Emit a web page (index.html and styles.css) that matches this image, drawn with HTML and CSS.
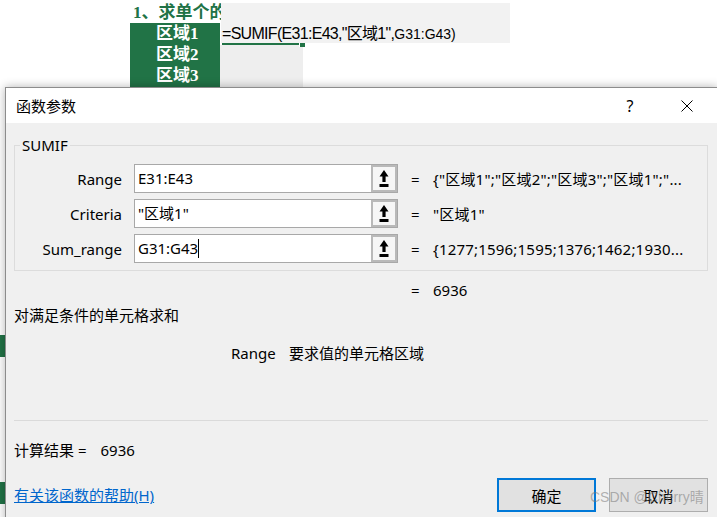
FILE: index.html
```html
<!DOCTYPE html>
<html lang="zh-CN">
<head>
<meta charset="utf-8">
<title>函数参数</title>
<link rel="stylesheet" href="styles.css">
</head>
<body>
<div class="screen">
  <div class="sheet">
    <div class="edge">
      <div class="edge-gap-a"></div>
      <div class="edge-cell"></div>
      <div class="edge-gap-b"></div>
      <div class="edge-cell"></div>
    </div>
    <div class="col-green">
      <div class="title-row">1、求单个的银行</div>
      <div class="cell">区域<span class="num">1</span></div>
      <div class="cell">区域<span class="num">2</span></div>
      <div class="cell">区域<span class="num">3</span></div>
      <div class="cell"></div>
    </div>
    <div class="col-sel">
      <div class="sel-top"></div>
      <div class="sel-line"></div>
      <div class="sel-body"></div>
    </div>
  </div>

  <div class="formula">=SUMIF(E31:E43,"区域1",<span class="small">G31:G43)</span></div>

  <div class="dialog">
    <div class="titlebar">
      <div class="title">函数参数</div>
      <div class="tb-btn">?</div>
      <div class="tb-btn tb-close">
        <svg width="12" height="12" viewBox="0 0 12 12"><path d="M0.5 0.5 L11.5 11.5 M11.5 0.5 L0.5 11.5" stroke="#000" stroke-width="1" fill="none"/></svg>
      </div>
    </div>
    <div class="body">
      <fieldset class="group">
        <legend>SUMIF</legend>
        <div class="params">
          <div class="label">Range</div>
          <div class="field"><div class="field-text">E31:E43</div><div class="pick"><svg width="10" height="17" viewBox="0 0 10 17"><path d="M5 0 L9.5 6.5 L6.6 6.5 L6.6 12 L3.4 12 L3.4 6.5 L0.5 6.5 Z" fill="#000"/><rect x="0.5" y="14" width="9" height="3" fill="#000"/></svg></div></div>
          <div class="eq">=</div>
          <div class="val">{"区域1";"区域2";"区域3";"区域1";"...</div>

          <div class="label">Criteria</div>
          <div class="field"><div class="field-text">"区域1"</div><div class="pick"><svg width="10" height="17" viewBox="0 0 10 17"><path d="M5 0 L9.5 6.5 L6.6 6.5 L6.6 12 L3.4 12 L3.4 6.5 L0.5 6.5 Z" fill="#000"/><rect x="0.5" y="14" width="9" height="3" fill="#000"/></svg></div></div>
          <div class="eq">=</div>
          <div class="val">"区域1"</div>

          <div class="label">Sum_range</div>
          <div class="field"><div class="field-text">G31:G43<span class="caret"></span></div><div class="pick"><svg width="10" height="17" viewBox="0 0 10 17"><path d="M5 0 L9.5 6.5 L6.6 6.5 L6.6 12 L3.4 12 L3.4 6.5 L0.5 6.5 Z" fill="#000"/><rect x="0.5" y="14" width="9" height="3" fill="#000"/></svg></div></div>
          <div class="eq">=</div>
          <div class="val">{1277;1596;1595;1376;1462;1930...</div>
        </div>
      </fieldset>

      <div class="total"><span class="total-eq">=</span><span>6936</span></div>
      <div class="desc">对满足条件的单元格求和</div>
      <div class="arg-desc"><span class="arg-name">Range</span><span>要求值的单元格区域</span></div>
      <div class="sep"></div>
      <div class="result"><span>计算结果 =</span><span class="result-val">6936</span></div>
      <div class="footer">
        <a class="help" href="#">有关该函数的帮助(H)</a>
        <div class="btn btn-ok">确定</div>
        <div class="btn">取消</div>
      </div>
    </div>
  </div>

  <div class="watermark">CSDN @Cherry晴</div>
</div>
</body>
</html>
```

FILE: styles.css
```css
html, body {
  margin: 0;
  padding: 0;
  background: #ffffff;
}
.screen {
  position: relative;
  width: 717px;
  height: 517px;
  overflow: hidden;
  font-family: "Noto Sans", "Noto Sans CJK SC", sans-serif;
}

/* spreadsheet behind */
.sheet {
  display: flex;
  align-items: flex-start;
}
.edge {
  width: 5px;
  margin-right: 125px;
}
.edge-gap-a { height: 335px; }
.edge-gap-b { height: 125px; }
.edge-cell { height: 22px; background: #217346; }

.col-green {
  width: 90px;
  white-space: nowrap;
  font-family: "Liberation Serif", "Noto Sans CJK SC", serif;
  font-weight: bold;
  font-size: 17px;
}
.title-row {
  height: 20px;
  padding-top: 3px;
  line-height: 20px;
  color: #217346;
  padding-left: 3px;
}
.cell {
  height: 21px;
  line-height: 21px;
  background: #217346;
  color: #ffffff;
  padding-left: 26px;
}
.cell:last-child { height: 40px; }
.num { font-family: "Liberation Serif", serif; }

.col-sel { width: 83px; }
.sel-top { height: 43px; }
.sel-line {
  position: relative;
  height: 2px;
  margin: 0 3px 0 2px;
  background: #217346;
}
.sel-line::after {
  content: "";
  position: absolute;
  right: -5px;
  top: -1px;
  width: 5px;
  height: 5px;
  background: #217346;
  border-left: 1px solid #fff;
}
.sel-body {
  height: 50px;
  background: #eeeeee;
}

.formula {
  position: absolute;
  left: 221px;
  top: 3px;
  width: 289px;
  height: 40px;
  box-sizing: border-box;
  padding: 21px 0 0 1px;
  line-height: 20px;
  background: #f2f2f2;
  font-family: "Liberation Sans", "Noto Sans CJK SC", sans-serif;
  font-size: 16px;
  letter-spacing: -0.7px;
  color: #000;
  white-space: nowrap;
}
.formula .small { font-size: 14px; letter-spacing: 0; }

/* dialog window */
.dialog {
  position: absolute;
  left: 5px;
  top: 87px;
  width: 713px;
  height: 440px;
  box-sizing: border-box;
  border: 1px solid #8c8c8c;
  background: #f0f0f0;
  box-shadow: 0 0 9px rgba(0, 0, 0, 0.3);
  font-size: 15px;
  color: #000;
}
.titlebar {
  display: flex;
  align-items: center;
  height: 35px;
  background: #ffffff;
  padding-right: 7px;
}
.title {
  flex: 1;
  padding-left: 10px;
  line-height: 20px;
}
.tb-btn {
  width: 46px;
  height: 35px;
  display: flex;
  align-items: center;
  justify-content: center;
  font-size: 16px;
}
.tb-close { margin-left: 11px; }

.body {
  padding: 12px 9px 0 8px;
}
.group {
  margin: 0;
  padding: 0 0 7px 0;
  border: 1px solid #dcdcdc;
  min-width: 0;
}
.group legend {
  padding: 0 2px;
  margin-left: 5px;
  line-height: 20px;
  font-size: 15px;
}
.params {
  display: grid;
  grid-template-columns: 119px 264px 35px 1fr;
  grid-auto-rows: 29px;
  row-gap: 6px;
  align-items: center;
  padding-top: 9px;
}
.label {
  text-align: right;
  padding-right: 12px;
  line-height: 20px;
}
.field {
  display: flex;
  height: 29px;
  box-sizing: border-box;
  border: 1px solid #a8a8a8;
  background: #ffffff;
}
.field-text {
  flex: 1;
  padding-left: 3px;
  line-height: 27px;
  white-space: nowrap;
}
.caret {
  display: inline-block;
  width: 1px;
  height: 19px;
  background: #000;
  vertical-align: middle;
  margin-top: -3px;
}
.pick {
  width: 26px;
  height: 27px;
  box-sizing: border-box;
  border: 2px solid #b9b9b9;
  background: #f6f6f6;
  display: flex;
  align-items: center;
  justify-content: center;
}
.eq {
  padding-left: 13px;
  line-height: 20px;
}
.val {
  line-height: 20px;
  white-space: nowrap;
  letter-spacing: 0.2px;
}

.total {
  margin-top: 9px;
  padding-left: 397px;
  line-height: 20px;
}
.total-eq {
  display: inline-block;
  width: 22px;
}
.desc {
  margin-top: 5px;
  line-height: 20px;
}
.arg-desc {
  margin-top: 18px;
  padding-left: 217px;
  line-height: 20px;
}
.arg-name {
  display: inline-block;
  width: 58px;
}
.sep {
  margin-top: 57px;
  height: 1px;
  background: #dadada;
}
.result {
  margin-top: 19px;
  line-height: 20px;
}
.result-val { margin-left: 14px; }

.footer {
  display: flex;
  align-items: center;
  margin-top: 18px;
  gap: 13px;
}
.help {
  flex: 1;
  color: #0066cc;
  text-decoration: underline;
  line-height: 20px;
}
.btn {
  width: 99px;
  height: 34px;
  box-sizing: border-box;
  border: 1px solid #adadad;
  background: #e1e1e1;
  display: flex;
  align-items: center;
  justify-content: center;
}
.btn-ok {
  border: 2px solid #0078d7;
}

.watermark {
  position: absolute;
  left: 590px;
  top: 487px;
  font-family: "Liberation Sans", "Noto Sans CJK SC", sans-serif;
  font-size: 14px;
  line-height: 20px;
  color: rgba(120, 120, 120, 0.55);
  white-space: nowrap;
}
```
